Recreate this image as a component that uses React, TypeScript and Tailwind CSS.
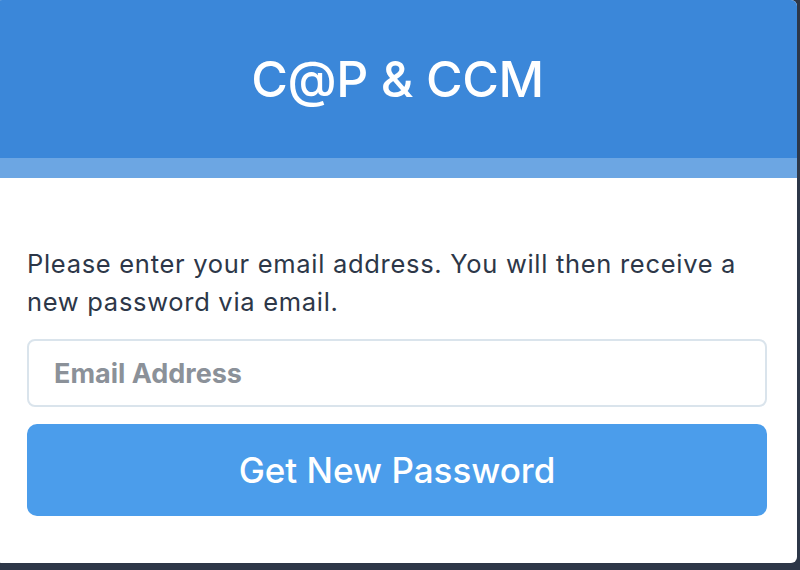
import React from "react";

export default function App() {
  return (
    <div
      className="w-[800px] h-[570px] overflow-hidden bg-[#2d3748]"
      style={{ fontFamily: "Inter, 'Noto Sans', sans-serif" }}
    >
      <div className="ml-[-4px] w-[801px] h-[563px] rounded-[6px] bg-white overflow-hidden flex flex-col">
        <div className="h-[158px] bg-[#3b87d9] flex items-center justify-center">
          <h1 className="text-white text-[50px] font-medium leading-none pl-[2px] tracking-[-0.4px]">
            C@P &amp; CCM
          </h1>
        </div>
        <div className="h-[20px] bg-[#6ca6e3]" />
        <div className="pl-[31px] pr-[30px] pt-[67px] pb-[47px] flex flex-col">
          <p className="text-[#2d3748] text-[25.5px] leading-[38px] tracking-[0.7px]">
            Please enter your email address. You will then receive a new password via email.
          </p>
          <input
            type="email"
            placeholder="Email Address"
            className="mt-[18px] h-[68px] w-full rounded-[8px] border-2 border-[#dae4ec] px-[25px] text-[27px] font-bold text-[#2d3748] placeholder:text-[#8b9199] outline-none"
          />
          <button className="mt-[17px] h-[92px] w-full rounded-[10px] bg-[#4b9deb] text-white text-[35px] font-medium">
            Get New Password
          </button>
        </div>
      </div>
    </div>
  );
}
